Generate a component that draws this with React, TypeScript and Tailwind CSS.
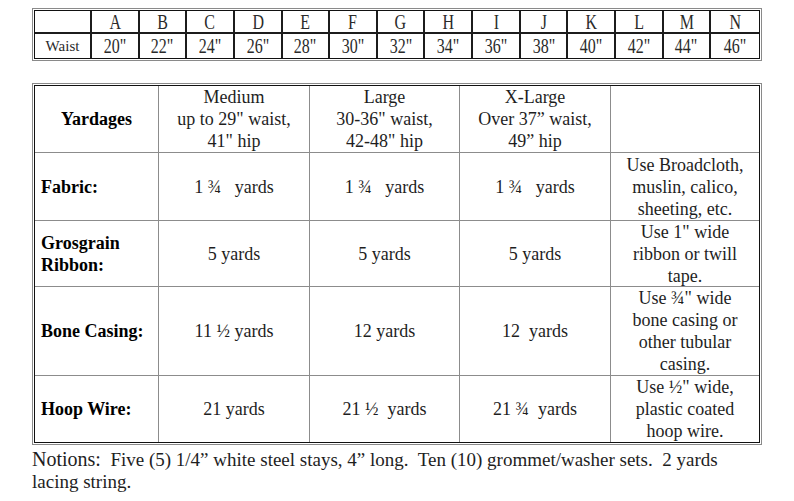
const sizes = ['A', 'B', 'C', 'D', 'E', 'F', 'G', 'H', 'I', 'J', 'K', 'L', 'M', 'N'];
const waists = [20, 22, 24, 26, 28, 30, 32, 34, 36, 38, 40, 42, 44, 46];

const headers = [
  ['Medium', 'up to 29" waist,', '41" hip'],
  ['Large', '30-36" waist,', '42-48" hip'],
  ['X-Large', 'Over 37” waist,', '49” hip'],
];

const rows: Array<{ label: string; amounts: string[]; note: string[] }> = [
  {
    label: 'Fabric:',
    amounts: ['1 ¾   yards', '1 ¾   yards', '1 ¾   yards'],
    note: ['Use Broadcloth,', 'muslin, calico,', 'sheeting, etc.'],
  },
  {
    label: 'Grosgrain Ribbon:',
    amounts: ['5 yards', '5 yards', '5 yards'],
    note: ['Use 1" wide', 'ribbon or twill', 'tape.'],
  },
  {
    label: 'Bone Casing:',
    amounts: ['11 ½ yards', '12 yards', '12  yards'],
    note: ['Use ¾" wide', 'bone casing or', 'other tubular', 'casing.'],
  },
  {
    label: 'Hoop Wire:',
    amounts: ['21 yards', '21 ½  yards', '21 ¾  yards'],
    note: ['Use ½" wide,', 'plastic coated', 'hoop wire.'],
  },
];

function Lines({ lines }: { lines: string[] }) {
  return (
    <div className="text-center">
      {lines.map((line) => (
        <div key={line}>{line}</div>
      ))}
    </div>
  );
}

export default function App() {
  return (
    <div className="min-h-[501px] w-[794px] bg-white pt-2 pl-8 font-['Liberation_Serif',serif]">
      {/* size chart */}
      <div className="w-[730px] border border-[#8a8a8a] p-px">
        <div className="grid grid-cols-[57px_repeat(14,minmax(0,1fr))] grid-rows-[23px_24px] border border-[#111] text-[#2a2a2a]">
          <div className="border-r-2 border-b-2 border-[#1c1c1c]" />
          {sizes.map((s, i) => (
            <div
              key={s}
              className={
                i === 13
                  ? 'flex items-center justify-center border-b-2 border-[#1c1c1c] text-[20px] leading-none'
                  : 'flex items-center justify-center border-r-2 border-b-2 border-[#1c1c1c] text-[20px] leading-none'
              }
            >
              <span className="inline-block scale-x-80">{s}</span>
            </div>
          ))}
          <div className="flex items-center justify-center border-r-2 border-[#1c1c1c] text-[15px] leading-none">
            Waist
          </div>
          {waists.map((w, i) => (
            <div
              key={w}
              className={
                i === 13
                  ? 'flex items-center justify-center text-[20px] leading-none'
                  : 'flex items-center justify-center border-r-2 border-[#1c1c1c] text-[20px] leading-none'
              }
            >
              <span className="inline-block scale-x-80">{w}"</span>
            </div>
          ))}
        </div>
      </div>

      {/* yardages */}
      <div className="mt-[22px] w-[730px] border border-[#8a8a8a] p-px">
        <div className="grid grid-cols-[124px_151px_150px_151px_minmax(0,1fr)] grid-rows-[67px_68px_66px_89px_66px] border border-[#111] text-[18px] leading-[22px] text-[#1e1e1e]">
          <div className="flex items-center justify-center border-r border-b border-[#8c8c8c] font-bold text-black">
            Yardages
          </div>
          {headers.map((h) => (
            <div
              key={h[0]}
              className="flex items-center justify-center border-r border-b border-[#8c8c8c]"
            >
              <Lines lines={h} />
            </div>
          ))}
          <div className="border-b border-[#8c8c8c]" />

          {rows.map((row, r) => {
            const last = r === rows.length - 1;
            return [
              <div
                key={row.label}
                className={
                  last
                    ? 'flex items-center border-r border-[#8c8c8c] pr-2 pl-[6px] font-bold text-black'
                    : 'flex items-center border-r border-b border-[#8c8c8c] pr-2 pl-[6px] font-bold text-black'
                }
              >
                {row.label}
              </div>,
              ...row.amounts.map((a, i) => (
                <div
                  key={row.label + i}
                  className={
                    last
                      ? 'flex items-center justify-center border-r border-[#8c8c8c] whitespace-pre'
                      : 'flex items-center justify-center border-r border-b border-[#8c8c8c] whitespace-pre'
                  }
                >
                  {a}
                </div>
              )),
              <div
                key={row.label + 'note'}
                className={
                  last
                    ? 'flex items-center justify-center'
                    : 'flex items-center justify-center border-b border-[#8c8c8c]'
                }
              >
                <Lines lines={row.note} />
              </div>,
            ];
          })}
        </div>
      </div>

      <p className="mt-[3px] w-[740px] text-[19px] leading-[22px] text-[#1e1e1e]">
        <span className="text-[20px]">Notions:</span>
        <span className="whitespace-pre">
          {'  Five (5) 1/4” white steel stays, 4” long.  Ten (10) grommet/washer sets.  2 yards'}
        </span>
        <br />
        lacing string.
      </p>
    </div>
  );
}
